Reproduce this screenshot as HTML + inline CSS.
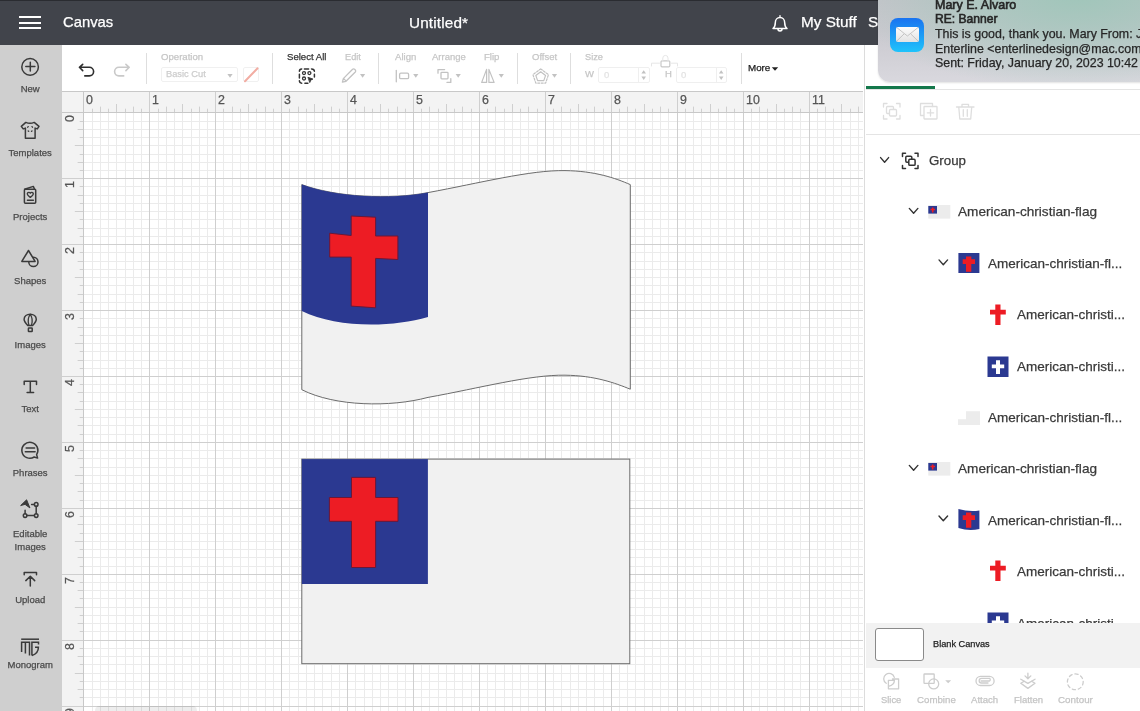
<!DOCTYPE html>
<html><head><meta charset="utf-8"><style>
html,body{margin:0;padding:0;width:1140px;height:711px;overflow:hidden;background:#fff;font-family:"Liberation Sans", sans-serif;}
.r,.t{position:absolute;}
.t{white-space:pre;will-change:transform;-webkit-text-stroke:0.25px currentColor;}
svg.r{overflow:visible}
</style></head><body>
<div class="r" style="left:0.00px;top:0.00px;width:1140.00px;height:45.00px;background:#41444b"></div>
<div class="r" style="left:0.00px;top:0.00px;width:1140.00px;height:1.30px;background:#2a2c31"></div>
<div class="r" style="left:19.00px;top:16.00px;width:22.00px;height:2.00px;background:#fff"></div>
<div class="r" style="left:19.00px;top:21.50px;width:22.00px;height:2.00px;background:#fff"></div>
<div class="r" style="left:19.00px;top:27.00px;width:22.00px;height:2.00px;background:#fff"></div>
<div class="t" style="left:62.60px;top:14.57px;font-size:14.8px;line-height:14.8px;color:#fff;font-weight:normal;">Canvas</div>
<div class="t" style="left:408.50px;top:14.55px;font-size:15.3px;line-height:15.3px;color:#fff;font-weight:normal;letter-spacing:0.15px;">Untitled*</div>
<div class="t" style="left:801.30px;top:14.45px;font-size:15.3px;line-height:15.3px;color:#fff;font-weight:normal;">My Stuff</div>
<div class="t" style="left:868.40px;top:14.45px;font-size:15.3px;line-height:15.3px;color:#fff;font-weight:normal;">S</div>
<svg class="r" style="left:769.5px;top:12.5px" width="20" height="20" viewBox="0 0 20 20"><path d="M10 2.2v1.6M3 15.6c1.8-1.4 2.3-3.2 2.3-5.8 0-3 2-5.2 4.7-5.2s4.7 2.2 4.7 5.2c0 2.6.5 4.4 2.3 5.8zM7.9 15.8a2.1 2.1 0 0 0 4.2 0" fill="none" stroke="#fff" stroke-width="1.5" stroke-linejoin="round"/></svg>
<div class="r" style="left:0.00px;top:45.00px;width:62.80px;height:666.00px;background:#cfcfcf"></div>
<div class="r" style="left:62.00px;top:45.00px;width:803.00px;height:46.00px;background:#fff"></div>
<div class="r" style="left:62.00px;top:91.00px;width:801.00px;height:1.00px;background:#c4c4c4"></div>
<div class="r" style="left:62.00px;top:92.00px;width:801.00px;height:20.30px;background:#f3f3f3"></div>
<div class="r" style="left:62.00px;top:112.30px;width:21.40px;height:598.70px;background:#f3f3f3"></div>
<div class="r" style="left:83.40px;top:112.30px;width:779.60px;height:598.70px;background:#fff"></div>
<svg class="r" style="left:0;top:0" width="1140" height="711"><path d="M92.5 112.3V711M100.5 112.3V711M108.5 112.3V711M116.5 112.3V711M125.5 112.3V711M133.5 112.3V711M141.5 112.3V711M158.5 112.3V711M166.5 112.3V711M174.5 112.3V711M182.5 112.3V711M191.5 112.3V711M199.5 112.3V711M207.5 112.3V711M223.5 112.3V711M232.5 112.3V711M240.5 112.3V711M248.5 112.3V711M256.5 112.3V711M265.5 112.3V711M273.5 112.3V711M289.5 112.3V711M298.5 112.3V711M306.5 112.3V711M314.5 112.3V711M322.5 112.3V711M331.5 112.3V711M339.5 112.3V711M355.5 112.3V711M364.5 112.3V711M372.5 112.3V711M380.5 112.3V711M388.5 112.3V711M397.5 112.3V711M405.5 112.3V711M421.5 112.3V711M429.5 112.3V711M438.5 112.3V711M446.5 112.3V711M454.5 112.3V711M462.5 112.3V711M471.5 112.3V711M487.5 112.3V711M495.5 112.3V711M504.5 112.3V711M512.5 112.3V711M520.5 112.3V711M528.5 112.3V711M537.5 112.3V711M553.5 112.3V711M561.5 112.3V711M570.5 112.3V711M578.5 112.3V711M586.5 112.3V711M594.5 112.3V711M603.5 112.3V711M619.5 112.3V711M627.5 112.3V711M635.5 112.3V711M644.5 112.3V711M652.5 112.3V711M660.5 112.3V711M668.5 112.3V711M685.5 112.3V711M693.5 112.3V711M701.5 112.3V711M710.5 112.3V711M718.5 112.3V711M726.5 112.3V711M734.5 112.3V711M751.5 112.3V711M759.5 112.3V711M767.5 112.3V711M776.5 112.3V711M784.5 112.3V711M792.5 112.3V711M800.5 112.3V711M817.5 112.3V711M825.5 112.3V711M833.5 112.3V711M841.5 112.3V711M850.5 112.3V711M858.5 112.3V711M83.4 121.5H864M83.4 129.5H864M83.4 137.5H864M83.4 145.5H864M83.4 154.5H864M83.4 162.5H864M83.4 170.5H864M83.4 186.5H864M83.4 195.5H864M83.4 203.5H864M83.4 211.5H864M83.4 219.5H864M83.4 228.5H864M83.4 236.5H864M83.4 252.5H864M83.4 261.5H864M83.4 269.5H864M83.4 277.5H864M83.4 285.5H864M83.4 294.5H864M83.4 302.5H864M83.4 318.5H864M83.4 327.5H864M83.4 335.5H864M83.4 343.5H864M83.4 351.5H864M83.4 360.5H864M83.4 368.5H864M83.4 384.5H864M83.4 392.5H864M83.4 401.5H864M83.4 409.5H864M83.4 417.5H864M83.4 425.5H864M83.4 434.5H864M83.4 450.5H864M83.4 458.5H864M83.4 467.5H864M83.4 475.5H864M83.4 483.5H864M83.4 491.5H864M83.4 500.5H864M83.4 516.5H864M83.4 524.5H864M83.4 533.5H864M83.4 541.5H864M83.4 549.5H864M83.4 557.5H864M83.4 566.5H864M83.4 582.5H864M83.4 590.5H864M83.4 598.5H864M83.4 607.5H864M83.4 615.5H864M83.4 623.5H864M83.4 631.5H864M83.4 648.5H864M83.4 656.5H864M83.4 664.5H864M83.4 673.5H864M83.4 681.5H864M83.4 689.5H864M83.4 697.5H864" stroke="#ebebeb" stroke-width="1" fill="none"/><path d="M83.5 92V711M149.5 92V711M215.5 92V711M281.5 92V711M347.5 92V711M413.5 92V711M479.5 92V711M545.5 92V711M611.5 92V711M677.5 92V711M743.5 92V711M809.5 92V711M62 112.5H864M62 178.5H864M62 244.5H864M62 310.5H864M62 376.5H864M62 442.5H864M62 508.5H864M62 574.5H864M62 640.5H864M62 706.5H864" stroke="#cfcfcf" stroke-width="1" fill="none"/><path d="M92.5 108.7V112.3M100.5 106.6V112.3M108.5 108.7V112.3M116.5 104V112.3M125.5 108.7V112.3M133.5 106.6V112.3M141.5 108.7V112.3M158.5 108.7V112.3M166.5 106.6V112.3M174.5 108.7V112.3M182.5 104V112.3M191.5 108.7V112.3M199.5 106.6V112.3M207.5 108.7V112.3M223.5 108.7V112.3M232.5 106.6V112.3M240.5 108.7V112.3M248.5 104V112.3M256.5 108.7V112.3M265.5 106.6V112.3M273.5 108.7V112.3M289.5 108.7V112.3M298.5 106.6V112.3M306.5 108.7V112.3M314.5 104V112.3M322.5 108.7V112.3M331.5 106.6V112.3M339.5 108.7V112.3M355.5 108.7V112.3M364.5 106.6V112.3M372.5 108.7V112.3M380.5 104V112.3M388.5 108.7V112.3M397.5 106.6V112.3M405.5 108.7V112.3M421.5 108.7V112.3M429.5 106.6V112.3M438.5 108.7V112.3M446.5 104V112.3M454.5 108.7V112.3M462.5 106.6V112.3M471.5 108.7V112.3M487.5 108.7V112.3M495.5 106.6V112.3M504.5 108.7V112.3M512.5 104V112.3M520.5 108.7V112.3M528.5 106.6V112.3M537.5 108.7V112.3M553.5 108.7V112.3M561.5 106.6V112.3M570.5 108.7V112.3M578.5 104V112.3M586.5 108.7V112.3M594.5 106.6V112.3M603.5 108.7V112.3M619.5 108.7V112.3M627.5 106.6V112.3M635.5 108.7V112.3M644.5 104V112.3M652.5 108.7V112.3M660.5 106.6V112.3M668.5 108.7V112.3M685.5 108.7V112.3M693.5 106.6V112.3M701.5 108.7V112.3M710.5 104V112.3M718.5 108.7V112.3M726.5 106.6V112.3M734.5 108.7V112.3M751.5 108.7V112.3M759.5 106.6V112.3M767.5 108.7V112.3M776.5 104V112.3M784.5 108.7V112.3M792.5 106.6V112.3M800.5 108.7V112.3M817.5 108.7V112.3M825.5 106.6V112.3M833.5 108.7V112.3M841.5 104V112.3M850.5 108.7V112.3M858.5 106.6V112.3M79.7 121.5H83.4M77.6 129.5H83.4M79.7 137.5H83.4M74.8 145.5H83.4M79.7 154.5H83.4M77.6 162.5H83.4M79.7 170.5H83.4M79.7 186.5H83.4M77.6 195.5H83.4M79.7 203.5H83.4M74.8 211.5H83.4M79.7 219.5H83.4M77.6 228.5H83.4M79.7 236.5H83.4M79.7 252.5H83.4M77.6 261.5H83.4M79.7 269.5H83.4M74.8 277.5H83.4M79.7 285.5H83.4M77.6 294.5H83.4M79.7 302.5H83.4M79.7 318.5H83.4M77.6 327.5H83.4M79.7 335.5H83.4M74.8 343.5H83.4M79.7 351.5H83.4M77.6 360.5H83.4M79.7 368.5H83.4M79.7 384.5H83.4M77.6 392.5H83.4M79.7 401.5H83.4M74.8 409.5H83.4M79.7 417.5H83.4M77.6 425.5H83.4M79.7 434.5H83.4M79.7 450.5H83.4M77.6 458.5H83.4M79.7 467.5H83.4M74.8 475.5H83.4M79.7 483.5H83.4M77.6 491.5H83.4M79.7 500.5H83.4M79.7 516.5H83.4M77.6 524.5H83.4M79.7 533.5H83.4M74.8 541.5H83.4M79.7 549.5H83.4M77.6 557.5H83.4M79.7 566.5H83.4M79.7 582.5H83.4M77.6 590.5H83.4M79.7 598.5H83.4M74.8 607.5H83.4M79.7 615.5H83.4M77.6 623.5H83.4M79.7 631.5H83.4M79.7 648.5H83.4M77.6 656.5H83.4M79.7 664.5H83.4M74.8 673.5H83.4M79.7 681.5H83.4M77.6 689.5H83.4M79.7 697.5H83.4" stroke="#cfcfcf" stroke-width="1" fill="none"/><path d="M62 91.5H863M62 112.5H863M83.5 92V711" stroke="#c8c8c8" stroke-width="1" fill="none"/></svg>
<div class="t" style="left:86.40px;top:93.50px;font-size:12.4px;line-height:12.4px;color:#555;font-weight:normal;">0</div>
<div class="t" style="left:152.32px;top:93.50px;font-size:12.4px;line-height:12.4px;color:#555;font-weight:normal;">1</div>
<div class="t" style="left:218.24px;top:93.50px;font-size:12.4px;line-height:12.4px;color:#555;font-weight:normal;">2</div>
<div class="t" style="left:284.16px;top:93.50px;font-size:12.4px;line-height:12.4px;color:#555;font-weight:normal;">3</div>
<div class="t" style="left:350.08px;top:93.50px;font-size:12.4px;line-height:12.4px;color:#555;font-weight:normal;">4</div>
<div class="t" style="left:416.00px;top:93.50px;font-size:12.4px;line-height:12.4px;color:#555;font-weight:normal;">5</div>
<div class="t" style="left:481.92px;top:93.50px;font-size:12.4px;line-height:12.4px;color:#555;font-weight:normal;">6</div>
<div class="t" style="left:547.84px;top:93.50px;font-size:12.4px;line-height:12.4px;color:#555;font-weight:normal;">7</div>
<div class="t" style="left:613.76px;top:93.50px;font-size:12.4px;line-height:12.4px;color:#555;font-weight:normal;">8</div>
<div class="t" style="left:679.68px;top:93.50px;font-size:12.4px;line-height:12.4px;color:#555;font-weight:normal;">9</div>
<div class="t" style="left:745.60px;top:93.50px;font-size:12.4px;line-height:12.4px;color:#555;font-weight:normal;">10</div>
<div class="t" style="left:811.52px;top:93.50px;font-size:12.4px;line-height:12.4px;color:#555;font-weight:normal;">11</div>
<div class="t" style="left:64.2px;top:115.20px;width:12px;height:12px;font-size:12.4px;line-height:12.4px;color:#555;"><span style="display:block;transform-origin:0 0;transform:translate(0,6.9px) rotate(-90deg);">0</span></div>
<div class="t" style="left:64.2px;top:181.12px;width:12px;height:12px;font-size:12.4px;line-height:12.4px;color:#555;"><span style="display:block;transform-origin:0 0;transform:translate(0,6.9px) rotate(-90deg);">1</span></div>
<div class="t" style="left:64.2px;top:247.04px;width:12px;height:12px;font-size:12.4px;line-height:12.4px;color:#555;"><span style="display:block;transform-origin:0 0;transform:translate(0,6.9px) rotate(-90deg);">2</span></div>
<div class="t" style="left:64.2px;top:312.96px;width:12px;height:12px;font-size:12.4px;line-height:12.4px;color:#555;"><span style="display:block;transform-origin:0 0;transform:translate(0,6.9px) rotate(-90deg);">3</span></div>
<div class="t" style="left:64.2px;top:378.88px;width:12px;height:12px;font-size:12.4px;line-height:12.4px;color:#555;"><span style="display:block;transform-origin:0 0;transform:translate(0,6.9px) rotate(-90deg);">4</span></div>
<div class="t" style="left:64.2px;top:444.80px;width:12px;height:12px;font-size:12.4px;line-height:12.4px;color:#555;"><span style="display:block;transform-origin:0 0;transform:translate(0,6.9px) rotate(-90deg);">5</span></div>
<div class="t" style="left:64.2px;top:510.72px;width:12px;height:12px;font-size:12.4px;line-height:12.4px;color:#555;"><span style="display:block;transform-origin:0 0;transform:translate(0,6.9px) rotate(-90deg);">6</span></div>
<div class="t" style="left:64.2px;top:576.64px;width:12px;height:12px;font-size:12.4px;line-height:12.4px;color:#555;"><span style="display:block;transform-origin:0 0;transform:translate(0,6.9px) rotate(-90deg);">7</span></div>
<div class="t" style="left:64.2px;top:642.56px;width:12px;height:12px;font-size:12.4px;line-height:12.4px;color:#555;"><span style="display:block;transform-origin:0 0;transform:translate(0,6.9px) rotate(-90deg);">8</span></div>
<div class="t" style="left:64.2px;top:708.48px;width:12px;height:12px;font-size:12.4px;line-height:12.4px;color:#555;"><span style="display:block;transform-origin:0 0;transform:translate(0,6.9px) rotate(-90deg);">9</span></div>
<div class="r" style="left:863.00px;top:45.00px;width:277.00px;height:666.00px;background:#fff"></div>
<div class="r" style="left:864.00px;top:45.00px;width:1.00px;height:666.00px;background:#dcdcdc"></div>
<div class="r" style="left:866.00px;top:86.20px;width:69.00px;height:2.70px;background:#14784b"></div>
<div class="r" style="left:866.00px;top:89.20px;width:274.00px;height:1.00px;background:#e4e4e4"></div>
<div class="r" style="left:866.00px;top:133.50px;width:274.00px;height:1.00px;background:#e4e4e4"></div>
<div class="t" style="left:0;width:60.4px;text-align:center;top:83.56px;font-size:9.5px;line-height:9.5px;color:#4a4a4a">New</div>
<div class="t" style="left:0;width:60.4px;text-align:center;top:147.96px;font-size:9.5px;line-height:9.5px;color:#4a4a4a">Templates</div>
<div class="t" style="left:0;width:60.4px;text-align:center;top:211.76px;font-size:9.5px;line-height:9.5px;color:#4a4a4a">Projects</div>
<div class="t" style="left:0;width:60.4px;text-align:center;top:275.96px;font-size:9.5px;line-height:9.5px;color:#4a4a4a">Shapes</div>
<div class="t" style="left:0;width:60.4px;text-align:center;top:339.76px;font-size:9.5px;line-height:9.5px;color:#4a4a4a">Images</div>
<div class="t" style="left:0;width:60.4px;text-align:center;top:403.96px;font-size:9.5px;line-height:9.5px;color:#4a4a4a">Text</div>
<div class="t" style="left:0;width:60.4px;text-align:center;top:468.16px;font-size:9.5px;line-height:9.5px;color:#4a4a4a">Phrases</div>
<div class="t" style="left:0;width:60.4px;text-align:center;top:528.96px;font-size:9.5px;line-height:9.5px;color:#4a4a4a">Editable</div>
<div class="t" style="left:0;width:60.4px;text-align:center;top:542.46px;font-size:9.5px;line-height:9.5px;color:#4a4a4a">Images</div>
<div class="t" style="left:0;width:60.4px;text-align:center;top:595.46px;font-size:9.5px;line-height:9.5px;color:#4a4a4a">Upload</div>
<div class="t" style="left:0;width:60.4px;text-align:center;top:659.96px;font-size:9.5px;line-height:9.5px;color:#4a4a4a">Monogram</div>
<svg class="r" style="left:0;top:0" width="62" height="711"><g fill="none" stroke="#3a3a3a" stroke-width="1.5" stroke-linecap="round" stroke-linejoin="round"><circle cx="30.1" cy="66.9" r="8.3"/><path d="M25.8 66.6H34.9M30.3 62.2V70.9"/><path d="M25.8 122.4Q30 124.2 34.2 122.4L39 126.4L37.3 128.9L35.1 128.1V138.2H25.4V128.1L23.2 128.9L21.3 126.4Z"/><path d="M28.2 126.6l-.5.6M32 126.6l.5.6M28.2 130.9l.5.4M32 130.9l-.5.4" stroke-width="1.3"/><rect x="24.4" y="189.3" width="11.3" height="14" rx="1"/><path d="M24.6 189.3L33.3 186.4L34.6 189.3"/><path d="M30.3 197.4L27.9 195.2Q26.7 193.6 28 192.6Q29.3 191.8 30.3 193.2Q31.3 191.8 32.6 192.6Q33.9 193.6 32.7 195.2Z" stroke-width="1.3"/><path d="M27.4 200.3H33.4" stroke-width="1.4"/><circle cx="33.4" cy="261.9" r="4.6"/><path d="M28.5 250.5L21.8 261.4H35.1Z" fill="#d0d0d0"/><path d="M27.8 325.5C25.5 323 24 320.8 24.1 319.2C24.2 316.2 26.8 314.2 30.2 314.2C33.6 314.2 36.2 316.2 36.3 319.2C36.4 320.8 34.9 323 32.6 325.5Z"/><path d="M30.2 314.4C27.9 317.5 27.9 322 28.9 325.4M30.2 314.4C32.5 317.5 32.5 322 31.5 325.4" stroke-width="1.3"/><rect x="28.4" y="327.9" width="3.8" height="3.5" rx=".5"/><path d="M24.2 384.4V381.3H36.5V384.4M30.3 381.3V392.6M27.1 392.6H33.6"/><path d="M34.2 457.0A8 8 0 1 1 36.6 454.6L37.6 458.1Z"/><path d="M26.1 448.1H34.6M25.3 451.7H35.1"/><path d="M20.9 505.3L26.6 499.8L29.9 507.9L25.4 504.6Z" fill="#3a3a3a" stroke-width="1"/><circle cx="36.2" cy="504.4" r="1.8"/><circle cx="25.1" cy="515.6" r="1.8"/><circle cx="36.2" cy="515.6" r="1.8"/><path d="M25.1 513.8V510.3M26.9 515.6H34.4M36.2 513.8V506.2M34.4 504.4H31.6"/><path d="M24.2 574.8V572.4H36.5V574.8M30.3 576.4V586M25.8 580.6L30.3 576.2L34.7 580.6"/><path d="M21.2 639.2H39" stroke-linecap="butt"/><path d="M21.6 651.9V642.3H29.5V655.6M25.4 642.3V653.6M31.9 655.6V642.3H38.5V644.5M35 647.3H38.4Q38.4 653.5 31.9 655.6" stroke-linecap="butt" stroke-linejoin="miter"/></g></svg>
<div class="r" style="left:145.50px;top:53.00px;width:1.20px;height:31.00px;background:#dedede"></div>
<div class="r" style="left:272.00px;top:53.00px;width:1.20px;height:31.00px;background:#dedede"></div>
<div class="r" style="left:377.80px;top:53.00px;width:1.20px;height:31.00px;background:#dedede"></div>
<div class="r" style="left:516.90px;top:53.00px;width:1.20px;height:31.00px;background:#dedede"></div>
<div class="r" style="left:570.30px;top:53.00px;width:1.20px;height:31.00px;background:#dedede"></div>
<div class="r" style="left:740.50px;top:53.00px;width:1.20px;height:31.00px;background:#dedede"></div>
<div class="r" style="left:160.50px;top:66.70px;width:77.00px;height:15.70px;box-sizing:border-box;border:1px solid #f0f0f0;border-radius:2px"></div>
<div class="r" style="left:243.00px;top:67.00px;width:15.60px;height:15.00px;box-sizing:border-box;border:1px solid #f0f0f0;border-radius:2px"></div>
<div class="r" style="left:598.00px;top:67.00px;width:52.00px;height:15.70px;box-sizing:border-box;border:1px solid #efefef;border-radius:2px"></div>
<div class="r" style="left:638.00px;top:67.50px;width:1.00px;height:14.70px;background:#efefef"></div>
<div class="r" style="left:676.00px;top:67.00px;width:51.40px;height:15.70px;box-sizing:border-box;border:1px solid #efefef;border-radius:2px"></div>
<div class="r" style="left:715.50px;top:67.50px;width:1.00px;height:14.70px;background:#efefef"></div>
<svg class="r" style="left:0;top:0" width="865" height="91"><g fill="none" stroke-linecap="round" stroke-linejoin="round"><path d="M82.7 64.4L79.4 67.3L82.7 70.6M79.6 67.3H89.3A4.3 4.3 0 0 1 89.3 75.9H84.8" stroke="#2e2e2e" stroke-width="1.6"/><path d="M125.9 64.4L129.2 67.3L125.9 70.6M129 67.3H118.9A4.3 4.3 0 0 0 118.9 75.9H123.7" stroke="#c9c9c9" stroke-width="1.6"/><path d="M299.4 71.3Q299.4 69 301.7 68.9M304.4 68.9H308.6M311.5 68.9Q314.3 69 314.4 71.3M299.4 74.2V77.9M314.4 74.2V76.9M299.4 80.8Q299.5 83.1 301.7 83.2M304.9 83.2H307.9" stroke="#333" stroke-width="1.5"/><circle cx="304" cy="73.1" r="1.5" stroke="#333" stroke-width="1.3"/><circle cx="309.4" cy="73.1" r="1.5" stroke="#333" stroke-width="1.3"/><circle cx="304" cy="78.5" r="1.5" stroke="#333" stroke-width="1.3"/><path d="M308.3 77.4L312.9 79.1L310.9 79.9L309.9 82.2Z" fill="#333" stroke="#333" stroke-width=".9"/><path d="M342.4 82.2L343.3 78.6L352.6 69.3Q353.6 68.4 354.6 69.3L355.3 70Q356.2 71 355.3 72L346 81.3ZM343.5 78.4L346.2 81.1" stroke="#c2c2c2" stroke-width="1.3"/><path d="M396.3 70.4V81.8" stroke="#c2c2c2" stroke-width="1.3"/><rect x="399.6" y="73.2" width="9" height="5.5" rx="1.3" stroke="#c2c2c2" stroke-width="1.3"/><path d="M438 73.2V69.6H444.6M450.8 78.6V82.4H447" stroke="#c2c2c2" stroke-width="1.3"/><rect x="441" y="72.3" width="7" height="6.5" rx=".8" stroke="#c2c2c2" stroke-width="1.3"/><path d="M481.7 82.4L486.6 69.4V82.4ZM488.9 69.4L494.1 82.4H488.9Z" stroke="#c2c2c2" stroke-width="1.2"/><path d="M540.7 68.9L548.5 74.6L545.6 83.1H535.8L532.9 74.6Z" stroke="#c2c2c2" stroke-width="1.2" stroke-dasharray="2 1.5"/><path d="M540.7 71.8L545.6 75.4L543.8 80.6H537.6L535.8 75.4Z" stroke="#c2c2c2" stroke-width="1.2"/><rect x="661" y="60.8" width="8.8" height="6" rx="1" stroke="#c8c8c8" stroke-width="1.2"/><path d="M662.8 60.8V58A2.6 2.6 0 0 1 668 58V60.8M651.5 66V63.2H659.5M671.5 63.2H677.5V66" stroke="#e6e6e6" stroke-width="1"/></g><g fill="#c2c2c2"><path d="M413.2 74H418.40000000000003L415.8 77.7Z"/><path d="M455.59999999999997 74H460.8L458.2 77.7Z"/><path d="M498.7 74H503.90000000000003L501.3 77.7Z"/><path d="M551.9 74H557.1L554.5 77.7Z"/><path d="M227.4 74H232.6L230 77.7Z"/><path d="M360.0 74H365.20000000000005L362.6 77.7Z"/><path d="M641.4000000000001 73.6L643.7 70.3L646.0 73.6ZM641.4000000000001 76.6L643.7 79.9L646.0 76.6Z"/><path d="M718.9000000000001 73.6L721.2 70.3L723.5 73.6ZM718.9000000000001 76.6L721.2 79.9L723.5 76.6Z"/></g><path d="M245 81.2L257.6 68.3" stroke="#f2ada3" stroke-width="2" stroke-linecap="round"/><path d="M771.8 67.2H778.2L775 70.8Z" fill="#222"/></svg>
<div class="t" style="left:160.50px;top:52.27px;font-size:9.6px;line-height:9.6px;color:#c6c6c6;font-weight:normal;">Operation</div>
<div class="t" style="left:166.00px;top:70.33px;font-size:9.3px;line-height:9.3px;color:#cdcdcd;font-weight:normal;">Basic Cut</div>
<div class="t" style="left:286.90px;top:52.27px;font-size:9.6px;line-height:9.6px;color:#333;font-weight:normal;">Select All</div>
<div class="t" style="left:344.70px;top:52.61px;font-size:9.2px;line-height:9.2px;color:#c6c6c6;font-weight:normal;">Edit</div>
<div class="t" style="left:395.00px;top:52.27px;font-size:9.6px;line-height:9.6px;color:#c6c6c6;font-weight:normal;">Align</div>
<div class="t" style="left:431.80px;top:52.36px;font-size:9.5px;line-height:9.5px;color:#c6c6c6;font-weight:normal;">Arrange</div>
<div class="t" style="left:483.50px;top:52.27px;font-size:9.6px;line-height:9.6px;color:#c6c6c6;font-weight:normal;">Flip</div>
<div class="t" style="left:531.80px;top:52.36px;font-size:9.5px;line-height:9.5px;color:#c6c6c6;font-weight:normal;">Offset</div>
<div class="t" style="left:585.00px;top:52.91px;font-size:9.2px;line-height:9.2px;color:#c6c6c6;font-weight:normal;">Size</div>
<div class="t" style="left:585.30px;top:69.26px;font-size:9.5px;line-height:9.5px;color:#c6c6c6;font-weight:normal;">W</div>
<div class="t" style="left:664.70px;top:69.26px;font-size:9.5px;line-height:9.5px;color:#c6c6c6;font-weight:normal;">H</div>
<div class="t" style="left:604.00px;top:69.76px;font-size:9.5px;line-height:9.5px;color:#e3e3e3;font-weight:normal;">0</div>
<div class="t" style="left:681.00px;top:69.76px;font-size:9.5px;line-height:9.5px;color:#e3e3e3;font-weight:normal;">0</div>
<div class="t" style="left:747.50px;top:62.60px;font-size:9.8px;line-height:9.8px;color:#222;font-weight:normal;">More</div>
<svg class="r" style="left:0;top:0" width="863" height="711"><path d="M301.8 184.6C335 197 390 200 428 192.6C480 183 530 170 565 170.6C595 171 615 178 630.3 184.6V389.2C615 383 595 375.6 565 375.2C530 374.6 480 388 428 397.4C390 407.5 335 406.5 301.8 389.7Z" fill="#f1f1f1" stroke="#6b6b6b" stroke-width="1"/><path d="M301.8 184.6C335 197 390 200 428 192.6V316.9C390 328 335 327.5 301.8 310.9Z" fill="#2b3991"/><path d="M351.2 216L375.6 217.2V236L397.9 236V259.5L375.6 258.4V307.8L351.2 306.1V257.1L329.7 257.1V233.2L351.2 235.5Z" fill="#ed1c24" stroke="#6a1838" stroke-width="1"/><rect x="301.8" y="459.1" width="328" height="204.6" fill="#f1f1f1" stroke="#6b6b6b" stroke-width="1"/><rect x="301.8" y="459.1" width="126.1" height="124.9" fill="#2b3991"/><path d="M351.5 477.4H375.6V497.5H398V521.3H375.6V567.5H351.5V521.3H329.4V497.5H351.5Z" fill="#ed1c24" stroke="#6a1838" stroke-width="1"/></svg>
<svg class="r" style="left:0;top:0" width="1140" height="711"><g fill="none" stroke-linecap="round" stroke-linejoin="round"><g stroke="#dedede" stroke-width="1.3"><path d="M883.5 107V103.5H887M896.5 103.5H900V107M900 115.5V119H896.5M887 119H883.5V115.5"/><rect x="886.5" y="106.5" width="7" height="7" rx="1"/><rect x="889.5" y="109.5" width="7" height="6.5" rx="1" fill="#fff"/></g><g stroke="#dedede" stroke-width="1.3"><path d="M923.5 115.5H920.5V103.5H932.5V106.5"/><rect x="924" y="106.5" width="13" height="12.5" rx=".5"/><path d="M930.5 109.5V116M927.3 112.8H933.7"/></g><g stroke="#dedede" stroke-width="1.3"><path d="M956.5 107H974M962 106.8V104.3H968.5V106.8M958.8 107.3L959.8 119H970.7L971.7 107.3M963.3 109.6V116.3M967.3 109.6V116.3"/></g><path d="M880.6 157.6L884.6 162.2L888.6 157.6" stroke="#333" stroke-width="1.4"/><g stroke="#333" stroke-width="1.5"><path d="M902.5 156.5V153.3H905.5M915 153.3H918V156.5M918 165.5V168.5H915M905.5 168.5H902.5V165.5"/><rect x="905.8" y="156.2" width="6" height="6" rx="1.1"/><rect x="908.8" y="159.3" width="6.3" height="6" rx="1.1" fill="#fff"/></g><path d="M909.3000000000001 208.4L913.6 213.2L917.9 208.4" stroke="#333" stroke-width="1.4"/><path d="M939.0 259.9L943.3 264.7L947.5999999999999 259.9" stroke="#333" stroke-width="1.4"/><path d="M909.3000000000001 465.4L913.6 470.2L917.9 465.4" stroke="#333" stroke-width="1.4"/><path d="M939.0 516.0L943.3 520.8000000000001L947.5999999999999 516.0" stroke="#333" stroke-width="1.4"/></g><rect x="928.3" y="205" width="22" height="13.6" fill="#ececec"/><rect x="928.3" y="206" width="8.7" height="7.6" fill="#2b3991"/><path d="M931.9 207.5h1.6v1.3h1.5v1.5h-1.5v2.3h-1.6v-2.3h-1.4v-1.5h1.4z" fill="#ed1c24"/><rect x="958.4" y="253" width="21" height="20" fill="#2b3991"/><path d="M966.0 256.6H971.3V259.2H975.0V264.1H971.3V271.7H966.0V264.1H962.6999999999999V259.2H966.0Z" fill="#ed1c24"/><path d="M995.3 304.5h5.2v5.2h5.3v4.9h-5.3v10.4h-5.2v-10.4h-5.3v-4.9h5.3z" fill="#ed1c24"/><rect x="987.5" y="356.5" width="21" height="20.5" fill="#2b3991"/><path d="M996.0 360.3h4v4.2h4.2v3.8h-4.2v5.8h-4v-5.8h-4.2v-3.8h4.2z" fill="#fff"/><path d="M958 419.3h8v-8h14v13.7H958z" fill="#ececec"/><rect x="928.3" y="462" width="22" height="13.6" fill="#ececec"/><rect x="928.3" y="463" width="8.7" height="7.6" fill="#2b3991"/><path d="M931.9 464.5h1.6v1.3h1.5v1.5h-1.5v2.3h-1.6v-2.3h-1.4v-1.5h1.4z" fill="#ed1c24"/><path d="M958.4 509Q968.9 512 979.4 510.5V529Q968.9 531.5 958.4 528Z" fill="#2b3991"/><path d="M966.0 512.6H971.3V515.2H975.0V520.1H971.3V527.7H966.0V520.1H962.6999999999999V515.2H966.0Z" fill="#ed1c24"/><path d="M995.3 560.5h5.2v5.2h5.3v4.9h-5.3v10.4h-5.2v-10.4h-5.3v-4.9h5.3z" fill="#ed1c24"/><rect x="987.5" y="612.5" width="21" height="20.5" fill="#2b3991"/><path d="M996.0 616.3h4v4.2h4.2v3.8h-4.2v5.8h-4v-5.8h-4.2v-3.8h4.2z" fill="#fff"/></svg>
<div class="t" style="left:929.00px;top:153.74px;font-size:13.3px;line-height:13.3px;color:#3a3a3a;font-weight:normal;">Group</div>
<div class="t" style="left:958.40px;top:204.88px;font-size:13.6px;line-height:13.6px;color:#3a3a3a;font-weight:normal;">American-christian-flag</div>
<div class="t" style="left:987.80px;top:256.57px;font-size:13.5px;line-height:13.5px;color:#3a3a3a;font-weight:normal;">American-christian-fl...</div>
<div class="t" style="left:1017.00px;top:308.07px;font-size:13.5px;line-height:13.5px;color:#3a3a3a;font-weight:normal;">American-christi...</div>
<div class="t" style="left:1017.00px;top:359.57px;font-size:13.5px;line-height:13.5px;color:#3a3a3a;font-weight:normal;">American-christi...</div>
<div class="t" style="left:987.50px;top:411.07px;font-size:13.5px;line-height:13.5px;color:#3a3a3a;font-weight:normal;">American-christian-fl...</div>
<div class="t" style="left:958.40px;top:461.88px;font-size:13.6px;line-height:13.6px;color:#3a3a3a;font-weight:normal;">American-christian-flag</div>
<div class="t" style="left:987.80px;top:513.57px;font-size:13.5px;line-height:13.5px;color:#3a3a3a;font-weight:normal;">American-christian-fl...</div>
<div class="t" style="left:1017.00px;top:565.07px;font-size:13.5px;line-height:13.5px;color:#3a3a3a;font-weight:normal;">American-christi...</div>
<div class="t" style="left:1017.00px;top:616.57px;font-size:13.5px;line-height:13.5px;color:#3a3a3a;font-weight:normal;">American-christi...</div>
<div class="r" style="left:95.00px;top:705.50px;width:102.00px;height:9.00px;background:rgba(0,0,0,.07);border-radius:4.5px"></div>
<div class="r" style="left:866.00px;top:622.60px;width:274.00px;height:45.70px;background:#f2f2f2"></div>
<div class="r" style="left:875.20px;top:628.20px;width:48.70px;height:33.20px;box-sizing:border-box;background:#fff;border:1.5px solid #8a8a8a;border-radius:3px"></div>
<div class="t" style="left:933.20px;top:640.21px;font-size:9.2px;line-height:9.2px;color:#222;font-weight:normal;">Blank Canvas</div>
<div class="r" style="left:866.00px;top:668.30px;width:274.00px;height:42.70px;background:#fff"></div>
<svg class="r" style="left:0;top:0" width="1140" height="711"><g fill="none" stroke="#cdcdcd" stroke-width="1.3" stroke-linecap="round" stroke-linejoin="round"><path d="M894.3 677.3A5.4 5.4 0 1 0 886.2 683.3M888.4 684V688.8H898.6V679H892.5M888.4 680.4H894.4Q894.4 684.8 888.4 686.3Z"/><rect x="924" y="674" width="10.2" height="9.4" rx=".6"/><circle cx="933.7" cy="683.9" r="5"/><path d="M989.5 685.5H980.6A4.6 4.6 0 0 1 980.6 676.3H989.5A4.6 4.6 0 0 1 989.5 685.5M981 681H989.5A1.6 1.6 0 0 0 989.5 678.3H981.5A2.3 2.3 0 0 0 981.5 683H988"/><path d="M1027.9 673.2V678.6M1025 675.9L1027.9 678.8L1030.8 675.9M1020.8 679.2L1027.9 683.4L1035 679.2M1024.2 681.2L1020.8 683.3L1027.9 688.4L1035 683.3L1031.6 681.2"/><circle cx="1075.3" cy="681.8" r="7.9" stroke-dasharray="3.2 2.9"/></g><path d="M945.2 680.2H951.2L948.2 683.2Z" fill="#cdcdcd"/></svg>
<div class="t" style="left:881.00px;top:695.24px;font-size:9.4px;line-height:9.4px;color:#c4c4c4;font-weight:normal;">Slice</div>
<div class="t" style="left:917.00px;top:694.99px;font-size:9.7px;line-height:9.7px;color:#c4c4c4;font-weight:normal;">Combine</div>
<div class="t" style="left:971.00px;top:695.07px;font-size:9.6px;line-height:9.6px;color:#c4c4c4;font-weight:normal;">Attach</div>
<div class="t" style="left:1013.50px;top:695.16px;font-size:9.5px;line-height:9.5px;color:#c4c4c4;font-weight:normal;">Flatten</div>
<div class="t" style="left:1057.70px;top:694.90px;font-size:9.8px;line-height:9.8px;color:#c4c4c4;font-weight:normal;">Contour</div>
<div class="r" style="left:878px;top:-20px;width:300px;height:101.6px;border-radius:12px;background:radial-gradient(ellipse 230px 95px at 200px 15px,#a0c6ba 0%,rgba(160,198,186,.6) 45%,rgba(160,198,186,0) 100%),linear-gradient(180deg,#c3c2c8 0%,#cac9cf 50%,#d9d8de 100%);box-shadow:0 1px 2px rgba(0,0,0,.12)"></div>
<div class="r" style="left:890.3px;top:17.6px;width:34px;height:34px;border-radius:8px;background:linear-gradient(180deg,#1a73f0,#1fc3fb)"></div>
<div class="r" style="left:895.8px;top:26.5px;width:23.2px;height:15.5px;border-radius:2px;background:linear-gradient(180deg,#fdfdfd,#e2e2e2)"></div>
<svg class="r" style="left:0;top:0" width="1140" height="90"><path d="M896.5 27.3L907.4 36L918.3 27.3M896.5 41.3L904 34M918.3 41.3L910.8 34" fill="none" stroke="#b9b9b9" stroke-width=".8"/></svg>
<div class="t" style="left:934.60px;top:-1.48px;font-size:12.5px;line-height:12.5px;color:#262626;font-weight:normal;-webkit-text-stroke:0.6px #262626;">Mary E. Alvaro</div>
<div class="t" style="left:934.60px;top:13.35px;font-size:12.1px;line-height:12.1px;color:#262626;font-weight:normal;-webkit-text-stroke:0.6px #262626;">RE: Banner</div>
<div class="t" style="left:934.60px;top:27.80px;font-size:12.4px;line-height:12.4px;color:#262626;font-weight:normal;">This is good, thank you. Mary From: J</div>
<div class="t" style="left:934.60px;top:42.70px;font-size:12.4px;line-height:12.4px;color:#262626;font-weight:normal;">Enterline &lt;enterlinedesign@mac.com</div>
<div class="t" style="left:934.60px;top:57.00px;font-size:12.4px;line-height:12.4px;color:#262626;font-weight:normal;">Sent: Friday, January 20, 2023 10:42</div>
</body></html>
